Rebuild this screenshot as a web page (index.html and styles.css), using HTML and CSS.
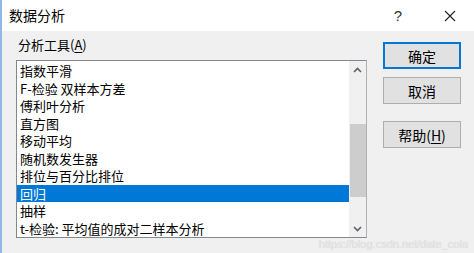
FILE: index.html
```html
<!DOCTYPE html>
<html lang="zh-CN">
<head>
    <meta charset="UTF-8">
    <title>数据分析</title>
    <link rel="stylesheet" href="styles.css">
</head>
<body>
    <div class="dialog">
        <div class="title-bar">
            <div class="title">数据分析</div>
            <div class="title-help">?</div>
            <div class="title-close">
                <svg width="12" height="12" viewBox="0 0 12 12"><path d="M1 1 L11 11 M11 1 L1 11" stroke="#222" stroke-width="1.1" fill="none"/></svg>
            </div>
        </div>
        <div class="content">
            <div class="tools">
                <div class="label">分析工具(<u>A</u>)</div>
                <div class="listbox">
                    <div class="items">
                        <div class="item">指数平滑</div>
                        <div class="item">F-检验 双样本方差</div>
                        <div class="item">傅利叶分析</div>
                        <div class="item">直方图</div>
                        <div class="item">移动平均</div>
                        <div class="item">随机数发生器</div>
                        <div class="item">排位与百分比排位</div>
                        <div class="item selected">回归</div>
                        <div class="item">抽样</div>
                        <div class="item">t-检验: 平均值的成对二样本分析</div>
                    </div>
                    <div class="scrollbar">
                        <div class="arrow">
                            <svg width="9" height="6" viewBox="0 0 9 6"><path d="M1 5 L4.5 1.5 L8 5" stroke="#606060" stroke-width="1.6" fill="none"/></svg>
                        </div>
                        <div class="track">
                            <div class="thumb"></div>
                        </div>
                        <div class="arrow">
                            <svg width="9" height="6" viewBox="0 0 9 6"><path d="M1 1 L4.5 4.5 L8 1" stroke="#606060" stroke-width="1.6" fill="none"/></svg>
                        </div>
                    </div>
                </div>
            </div>
            <div class="buttons">
                <button class="btn default">确定</button>
                <button class="btn">取消</button>
                <button class="btn help">帮助(<u>H</u>)</button>
            </div>
        </div>
        <div class="watermark">https://blog.csdn.net/date_cola</div>
    </div>
</body>
</html>
```
FILE: styles.css
```css
body {
    margin: 0;
    width: 474px;
    height: 253px;
    overflow: hidden;
    font-family: "Noto Sans CJK SC", "Noto Sans", sans-serif;
    color: #000;
}

.dialog {
    position: relative;
    width: 472px;
    height: 253px;
    border-left: 2px solid #8fb8e6;
    background-color: #f0f0f0;
}

.title-bar {
    height: 31px;
    background-color: #fff;
    display: flex;
    align-items: center;
}

.title {
    flex: 1;
    padding-left: 7px;
    font-size: 14px;
    line-height: 31px;
}

.title-help {
    width: 20px;
    font-family: "Liberation Sans", sans-serif;
    font-size: 15px;
    color: #333;
    margin-right: 36px;
    text-align: center;
}

.title-close {
    width: 12px;
    height: 12px;
    margin-right: 18px;
    display: flex;
}

.content {
    display: flex;
    padding-left: 14px;
}

.tools {
    width: 351px;
}

.label {
    font-size: 13px;
    line-height: 16px;
    padding: 6px 0 7px 2px;
}

.label u, .btn u {
    text-underline-offset: 2px;
}

.listbox {
    display: flex;
    height: 176px;
    background-color: #fff;
    border: 1px solid #828790;
    border-right-color: #b0b0b0;
    overflow: hidden;
}

.items {
    flex: 1;
    padding-top: 1px;
}

.item {
    height: 17.5px;
    line-height: 17px;
    font-size: 13px;
    padding-left: 3px;
    white-space: nowrap;
}

.item.selected {
    background-color: #0078d7;
    color: #fff;
}

.scrollbar {
    width: 17px;
    display: flex;
    flex-direction: column;
    background-color: #f0f0f0;
}

.arrow {
    height: 17px;
    display: flex;
    justify-content: center;
    align-items: center;
}

.track {
    flex: 1;
    padding-top: 46px;
}

.thumb {
    height: 73px;
    margin-left: 1px;
    background-color: #cdcdcd;
}

.buttons {
    display: flex;
    flex-direction: column;
    margin-left: 16px;
    padding-top: 11px;
    gap: 8px;
}

.btn {
    width: 78px;
    height: 27px;
    background-color: #e1e1e1;
    border: 1px solid #adadad;
    font-family: "Noto Sans CJK SC", "Noto Sans", sans-serif;
    font-size: 14px;
    padding: 0;
    color: #000;
}

.btn.default {
    border: 2px solid #0078d7;
}

.btn.help {
    margin-top: 9px;
}

.watermark {
    position: absolute;
    right: 6px;
    bottom: 3px;
    font-family: "Liberation Sans", sans-serif;
    font-size: 11px;
    color: #e4e4e4;
    text-shadow: 0 0 1px #d0d0d0;
}
```
